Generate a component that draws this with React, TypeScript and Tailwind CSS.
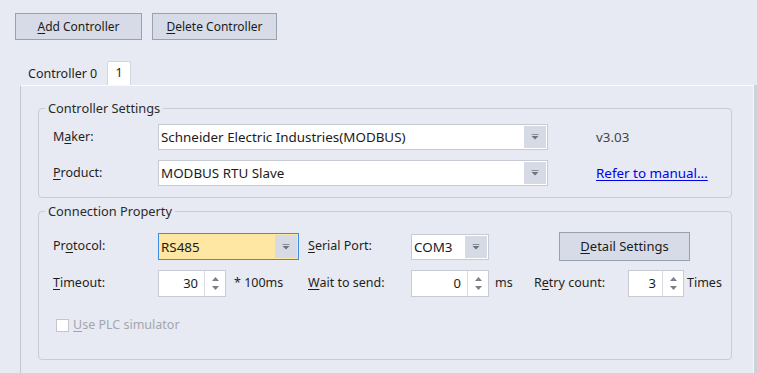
import React from "react";

const U = ({ children }: { children: React.ReactNode }) => (
  <span className="underline underline-offset-[2px] decoration-[1px]">{children}</span>
);

const DropArrow = () => (
  <svg width="8" height="6" viewBox="0 0 8 6">
    <rect x="0.5" y="0" width="7" height="1" fill="#8a8e98" />
    <path d="M0.5 2 L7.5 2 L4 5.5 Z" fill="#6f737c" />
  </svg>
);

const Combo = ({
  w,
  text,
  active,
  h = 25,
}: {
  w: number;
  text: string;
  active?: boolean;
  h?: number;
}) => (
  <div
    className={
      "flex items-stretch border shrink-0 " +
      (active ? "border-[#3b8ee0] bg-[#fde7a2]" : "border-[#c7cad2] bg-white")
    }
    style={{ width: w, height: h }}
  >
    <div className="flex-1 flex items-center pl-[2px] text-[13.4px] text-[#1b1b1b] whitespace-nowrap overflow-hidden">
      {text}
    </div>
    <div className="w-[22px] m-[1px] bg-[#d6dae5] flex items-center justify-center">
      <DropArrow />
    </div>
  </div>
);

const Spin = ({ w, value }: { w: number; value: string }) => (
  <div
    className="flex items-stretch border border-[#c7cad2] bg-white h-[27px] shrink-0"
    style={{ width: w }}
  >
    <div className="flex-1 flex items-center justify-end pr-[6px] text-[13px] text-[#1b1b1b]">
      {value}
    </div>
    <div className="w-[21px] border-l border-[#d7dae0] flex flex-col items-center justify-center gap-[5px]">
      <svg width="7" height="4" viewBox="0 0 7 4">
        <path d="M0 4 L7 4 L3.5 0 Z" fill="#7a7e87" />
      </svg>
      <svg width="7" height="4" viewBox="0 0 7 4">
        <path d="M0 0 L7 0 L3.5 4 Z" fill="#7a7e87" />
      </svg>
    </div>
  </div>
);

const Btn = ({
  w,
  h,
  children,
  size = "text-[12px]",
}: {
  w: number;
  h: number;
  children: React.ReactNode;
  size?: string;
}) => (
  <div
    className={
      "flex items-center justify-center border border-[#9aa0ad] bg-[#d6dbe7] text-[#1b1b1b] shrink-0 " +
      size
    }
    style={{ width: w, height: h }}
  >
    {children}
  </div>
);

export default function App() {
  return (
    <div
      className="w-[757px] h-[373px] overflow-hidden bg-[#e7eaf2] text-[12.5px] text-[#1e1e1e] relative"
      style={{ fontFamily: '"Noto Sans", "Open Sans", sans-serif' }}
    >
      {/* top buttons */}
      <div className="flex gap-[10px] pl-[15px] pt-[13px]">
        <Btn w={127} h={27}>
          <span>
            <U>A</U>dd Controller
          </span>
        </Btn>
        <Btn w={125} h={27}>
          <span>
            <U>D</U>elete Controller
          </span>
        </Btn>
      </div>

      {/* tabs */}
      <div className="flex items-end pl-[20px] mt-[21px] h-[24px]">
        <div className="w-[87px] h-[22px] pl-[8px] flex items-center">Controller 0</div>
        <div className="w-[24px] h-[24px] bg-white border border-b-0 border-[#d3d6dd] rounded-t-[2px] flex items-center justify-center">
          1
        </div>
      </div>

      {/* panel */}
      <div className="flex">
        <div className="ml-[20px] w-[734px] h-[300px] border-l border-l-[#c2c6ce] border-t border-t-[#fafbfc] border-r border-r-[#f5f6f9] pt-[13px] pl-[17px]">
          {/* Controller Settings */}
          <fieldset className="min-w-0 w-[694px] h-[99px] border border-[#c9ccd4] rounded-[4px] px-[14px]">
            <legend className="ml-[-8px] px-[3px] text-[12.8px] text-[#2a2a2a]">
              Controller Settings
            </legend>
            <div className="flex flex-col gap-[10px] mt-[6px]">
              <div className="flex items-center">
                <div className="w-[105px]">
                  M<U>a</U>ker:
                </div>
                <Combo w={390} h={26} text="Schneider Electric Industries(MODBUS)" />
                <div className="ml-[48px] text-[13.4px] text-[#444]">v3.03</div>
              </div>
              <div className="flex items-center">
                <div className="w-[105px]">
                  <U>P</U>roduct:
                </div>
                <Combo w={390} h={26} text="MODBUS RTU Slave" />
                <div className="ml-[48px] text-[13.4px] text-[#0000ee] underline underline-offset-[2px]">
                  Refer to manual...
                </div>
              </div>
            </div>
          </fieldset>

          {/* Connection Property */}
          <fieldset className="min-w-0 mt-[4px] w-[694px] h-[158px] border border-[#c9ccd4] rounded-[4px] px-[14px]">
            <legend className="ml-[-8px] px-[3px] text-[12.8px] text-[#2a2a2a]">
              Connection Property
            </legend>
            <div className="flex items-center mt-[11px]">
              <div className="w-[105px] shrink-0">
                Pr<U>o</U>tocol:
              </div>
              <Combo w={141} h={27} text="RS485" active />
              <div className="w-[112px] pl-[9px] shrink-0">
                <U>S</U>erial Port:
              </div>
              <Combo w={78} h={26} text="COM3" />
              <div className="ml-[70px]">
                <Btn w={131} h={29} size="text-[13px]">
                  <span>
                    <U>D</U>etail Settings
                  </span>
                </Btn>
              </div>
            </div>
            <div className="flex items-center mt-[9px]">
              <div className="w-[105px] shrink-0">
                <U>T</U>imeout:
              </div>
              <Spin w={68} value="30" />
              <div className="w-[82px] pl-[8px] shrink-0">* 100ms</div>
              <div className="w-[103px] shrink-0">
                <U>W</U>ait to send:
              </div>
              <Spin w={78} value="0" />
              <div className="w-[45px] pl-[6px] shrink-0">ms</div>
              <div className="w-[94px] shrink-0">
                R<U>e</U>try count:
              </div>
              <Spin w={56} value="3" />
              <div className="pl-[3px] whitespace-nowrap">Times</div>
            </div>
            <div className="flex items-center mt-[19px] ml-[3px] text-[#a3a6ad]">
              <div className="w-[13px] h-[13px] border border-[#c3c6cc] bg-white mr-[4px]" />
              <span>
                <U>U</U>se PLC simulator
              </span>
            </div>
          </fieldset>
        </div>
        <div className="w-[3px] h-[300px] bg-[#cdd1da]" />
      </div>
    </div>
  );
}
